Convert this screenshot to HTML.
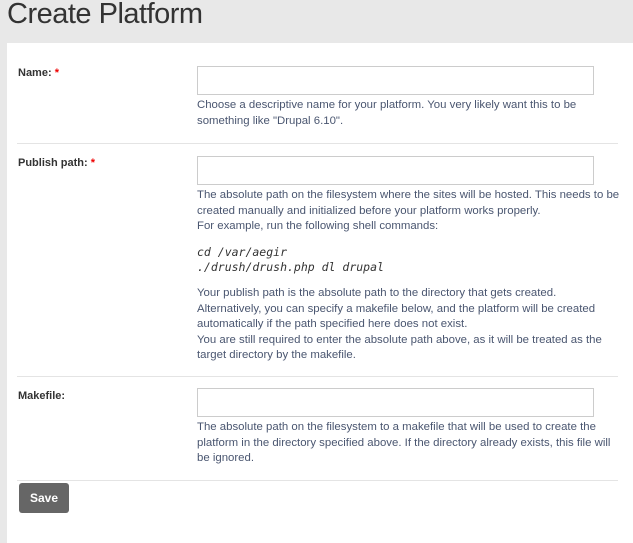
<!DOCTYPE html>
<html><head><style>
body{margin:0;width:633px;height:543px;background:#e8e8e8;font-family:"Liberation Sans",sans-serif;position:relative;overflow:hidden}
h1{position:absolute;left:7px;top:-4px;margin:0;font-size:29px;line-height:36px;font-weight:normal;color:#333;letter-spacing:-0.5px}
.panel{position:absolute;left:7px;top:43px;width:626px;height:500px;background:#fff}
.a{position:absolute}
.lbl{font-size:11px;font-weight:bold;color:#333}
.lbl span{color:#e00}
.in{position:absolute;left:197px;width:395px;height:27px;border:1px solid #ccc;background:#fff}
.d{position:absolute;left:197px;font-size:11.4px;line-height:15.5px;color:#4a5670;white-space:nowrap}
.code{position:absolute;left:197px;font-family:"DejaVu Sans Mono",monospace;font-style:italic;font-size:11.5px;color:#333;line-height:15px}
.hr{position:absolute;left:17px;width:601px;height:1px;background:#e4e4e4}
.btn{position:absolute;left:19px;top:483px;width:50px;height:30px;background:#666;color:#fff;font-weight:bold;font-size:12px;line-height:30px;text-align:center;border-radius:3px}
</style></head><body>
<h1>Create Platform</h1>
<div class="panel"></div>
<div class="a lbl" style="left:18px;top:67px">Name: <span>*</span></div>
<div class="in" style="top:66px"></div>
<div class="d" style="top:98px">Choose a descriptive name for your platform. You very likely want this to be<br>something like "Drupal 6.10".</div>
<div class="hr" style="top:143px"></div>
<div class="a lbl" style="left:18px;top:157px">Publish path: <span>*</span></div>
<div class="in" style="top:156px"></div>
<div class="d" style="top:188px">The absolute path on the filesystem where the sites will be hosted. This needs to be<br>created manually and initialized before your platform works properly.<br>For example, run the following shell commands:</div>
<div class="code" style="top:245px">cd /var/aegir<br>./drush/drush.php dl drupal</div>
<div class="d" style="top:286px">Your publish path is the absolute path to the directory that gets created.<br>Alternatively, you can specify a makefile below, and the platform will be created<br>automatically if the path specified here does not exist.<br>You are still required to enter the absolute path above, as it will be treated as the<br>target directory by the makefile.</div>
<div class="hr" style="top:376px"></div>
<div class="a lbl" style="left:18px;top:390px">Makefile:</div>
<div class="in" style="top:388px"></div>
<div class="d" style="top:420px">The absolute path on the filesystem to a makefile that will be used to create the<br>platform in the directory specified above. If the directory already exists, this file will<br>be ignored.</div>
<div class="hr" style="top:480px"></div>
<div class="btn">Save</div>
</body></html>
